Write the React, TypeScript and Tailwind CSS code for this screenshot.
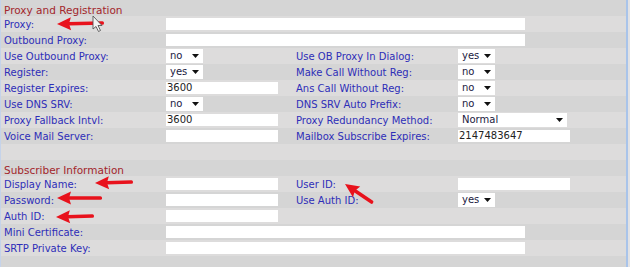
import React from "react";

type Field =
  | { kind: "input"; value?: string; width: number }
  | { kind: "select"; value: string; width: number };

interface Row {
  label?: string;
  field?: Field;
  label2?: string;
  field2?: Field;
  header?: string;
}

const rows: Row[] = [
  { header: "Proxy and Registration" },
  { label: "Proxy:", field: { kind: "input", width: 359 } },
  { label: "Outbound Proxy:", field: { kind: "input", width: 359 } },
  {
    label: "Use Outbound Proxy:",
    field: { kind: "select", value: "no", width: 37 },
    label2: "Use OB Proxy In Dialog:",
    field2: { kind: "select", value: "yes", width: 37 },
  },
  {
    label: "Register:",
    field: { kind: "select", value: "yes", width: 37 },
    label2: "Make Call Without Reg:",
    field2: { kind: "select", value: "no", width: 37 },
  },
  {
    label: "Register Expires:",
    field: { kind: "input", value: "3600", width: 112 },
    label2: "Ans Call Without Reg:",
    field2: { kind: "select", value: "no", width: 37 },
  },
  {
    label: "Use DNS SRV:",
    field: { kind: "select", value: "no", width: 37 },
    label2: "DNS SRV Auto Prefix:",
    field2: { kind: "select", value: "no", width: 37 },
  },
  {
    label: "Proxy Fallback Intvl:",
    field: { kind: "input", value: "3600", width: 112 },
    label2: "Proxy Redundancy Method:",
    field2: { kind: "select", value: "Normal", width: 109 },
  },
  {
    label: "Voice Mail Server:",
    field: { kind: "input", width: 112 },
    label2: "Mailbox Subscribe Expires:",
    field2: { kind: "input", value: "2147483647", width: 112 },
  },
  {},
  { header: "Subscriber Information" },
  {
    label: "Display Name:",
    field: { kind: "input", width: 112 },
    label2: "User ID:",
    field2: { kind: "input", width: 112 },
  },
  {
    label: "Password:",
    field: { kind: "input", width: 112 },
    label2: "Use Auth ID:",
    field2: { kind: "select", value: "yes", width: 37 },
  },
  { label: "Auth ID:", field: { kind: "input", width: 112 } },
  { label: "Mini Certificate:", field: { kind: "input", width: 359 } },
  { label: "SRTP Private Key:", field: { kind: "input", width: 359 } },
  {},
];

function FieldBox({ field }: { field: Field }) {
  if (field.kind === "input") {
    return (
      <div
        className="shrink-0 h-[12px] bg-white text-[10px] leading-[12px] text-[#222] pl-[1px] whitespace-nowrap"
        style={{ width: field.width }}
      >
        {field.value}
      </div>
    );
  }
  return (
    <div
      className="shrink-0 h-[14px] bg-white text-[10px] leading-[14px] text-[#1a1a40] pl-[4px] flex items-center justify-between pr-[4px]"
      style={{ width: field.width }}
    >
      <span>{field.value}</span>
      <svg width="7" height="4" viewBox="0 0 7 4">
        <polygon points="0,0 7,0 3.5,4" fill="#111" />
      </svg>
    </div>
  );
}

function Arrow({ tip, tail }: { tip: [number, number]; tail: [number, number] }) {
  const dx = tail[0] - tip[0];
  const dy = tail[1] - tip[1];
  const len = Math.sqrt(dx * dx + dy * dy);
  const angle = (Math.atan2(dy, dx) * 180) / Math.PI;
  return (
    <g transform={`translate(${tip[0]} ${tip[1]}) rotate(${angle})`}>
      <rect x={10} y={-1.8} width={len - 10} height={3.6} rx={1.6} fill="#e8121c" />
      <polygon points="0,0 14,-6.5 12,0 14,6.5" fill="#e8121c" />
    </g>
  );
}

export default function App() {
  return (
    <div
      className="w-[630px] h-[267px] overflow-hidden bg-[#e2e2e4] relative"
      style={{ fontFamily: '"DejaVu Sans", Verdana, sans-serif' }}
    >
      <div className="w-[628px] border-l border-l-[#c5d3ea] border-r-2 border-r-[#a9c4ea]">
        {rows.map((row, i) => (
          <div
            key={i}
            className={`h-[16px] flex items-center ${i % 2 === 0 ? "bg-[#d5d5d5]" : "bg-[#dddcdc]"}`}
          >
            {row.header ? (
              <div className="pl-[3px] pt-[4px] text-[10.5px] text-[#a3262c] leading-[16px] whitespace-nowrap">
                {row.header}
              </div>
            ) : (
              <>
                <div className="w-[165px] shrink-0 pl-[3px] text-[10px] text-[#2e2eb8] whitespace-nowrap">
                  {row.label}
                </div>
                <div className="w-[130px] shrink-0 flex items-center">
                  {row.field && <FieldBox field={row.field} />}
                </div>
                <div className="w-[162px] shrink-0 text-[10px] text-[#2e2eb8] whitespace-nowrap">
                  {row.label2}
                </div>
                <div className="flex-1 flex items-center">
                  {row.field2 && <FieldBox field={row.field2} />}
                </div>
              </>
            )}
          </div>
        ))}
      </div>

      <svg className="absolute inset-0 pointer-events-none" width="630" height="267">
        <Arrow tip={[57, 24]} tail={[104, 23]} />
        <Arrow tip={[95, 183]} tail={[133, 182]} />
        <Arrow tip={[57, 198]} tail={[102, 198]} />
        <Arrow tip={[56, 217]} tail={[94, 216]} />
        <Arrow tip={[345, 184]} tail={[373, 203]} />
        {/* mouse pointer */}
        <path
          d="M93 16 L93 29 L96 26.5 L98.5 31.5 L100.5 30.5 L98 25.5 L102 25.5 Z"
          fill="#f4f4f4"
          stroke="#555"
          strokeWidth="0.9"
          strokeLinejoin="round"
        />
      </svg>
    </div>
  );
}
